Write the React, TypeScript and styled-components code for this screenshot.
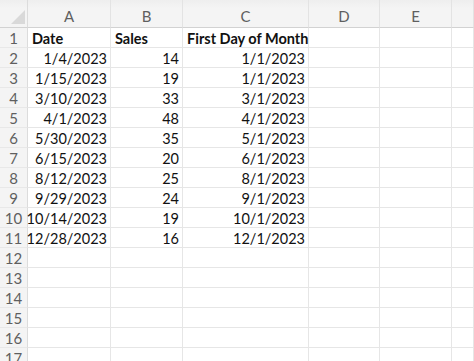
import React from "react";
import styled, { createGlobalStyle } from "styled-components";

const GlobalStyle = createGlobalStyle`
  html, body {
    margin: 0;
    padding: 0;
    background: #ffffff;
  }
  body {
    font-family: Lato, "Open Sans", "Liberation Sans", sans-serif;
    overflow: hidden;
  }
`;

const columns = ["A", "B", "C", "D", "E", ""];
const colWidths = "28px 83px 72px 126px 71px 72px 1fr";

type Row = [string, string, string];
const data: Row[] = [
  ["Date", "Sales", "First Day of Month"],
  ["1/4/2023", "14", "1/1/2023"],
  ["1/15/2023", "19", "1/1/2023"],
  ["3/10/2023", "33", "3/1/2023"],
  ["4/1/2023", "48", "4/1/2023"],
  ["5/30/2023", "35", "5/1/2023"],
  ["6/15/2023", "20", "6/1/2023"],
  ["8/12/2023", "25", "8/1/2023"],
  ["9/29/2023", "24", "9/1/2023"],
  ["10/14/2023", "19", "10/1/2023"],
  ["12/28/2023", "16", "12/1/2023"],
];
const totalRows = 17;

const Sheet = styled.div`
  display: grid;
  grid-template-columns: ${colWidths};
  grid-template-rows: 28px;
  grid-auto-rows: 20px;
  width: 474px;
  height: 361px;
  overflow: hidden;
`;

const Corner = styled.div`
  position: relative;
  background: linear-gradient(#eeeeee, #f4f4f4 30%);
  border-bottom: 1px solid #d2d2d2;
  border-right: 1px solid #dcdcdc;
  svg {
    position: absolute;
    left: 11px;
    bottom: 3px;
  }
`;

const ColHead = styled.div`
  display: flex;
  align-items: flex-end;
  justify-content: center;
  padding-bottom: 1px;
  background: linear-gradient(#eeeeee, #f4f4f4 30%);
  border-bottom: 1px solid #d2d2d2;
  border-right: 1px solid #e3e3e3;
  color: #5f5f5f;
  font-size: 15px;
  line-height: 19px;
`;

const RowHead = styled.div`
  display: flex;
  align-items: center;
  justify-content: center;
  padding-top: 1px;
  background: #f4f4f4;
  border-right: 1px solid #dcdcdc;
  border-bottom: 1px solid #e8e8e8;
  color: #5f5f5f;
  font-size: 15px;
`;

const Cell = styled.div<{ $bold?: boolean; $right?: boolean }>`
  display: flex;
  align-items: center;
  justify-content: ${(p) => (p.$right ? "flex-end" : "flex-start")};
  padding: 1px 3px 0 4px;
  border-right: 1px solid #e6e6e6;
  border-bottom: 1px solid #e6e6e6;
  color: #111111;
  font-size: 14.5px;
  font-weight: ${(p) => (p.$bold ? 700 : 400)};
  white-space: nowrap;
  overflow: visible;
`;

export default function App() {
  const rows = Array.from({ length: totalRows }, (_, i) => data[i]);
  return (
    <>
      <GlobalStyle />
      <Sheet>
        <Corner>
          <svg width="14" height="14" viewBox="0 0 14 14">
            <polygon points="14,0 14,14 0,14" fill="#d9d9d9" />
          </svg>
        </Corner>
        {columns.map((c, i) => (
          <ColHead key={i}>{c}</ColHead>
        ))}
        {rows.map((row, r) => (
          <React.Fragment key={r}>
            <RowHead>{r + 1}</RowHead>
            {columns.map((_, c) => {
              const value = row && c < 3 ? row[c] : "";
              const header = r === 0;
              return (
                <Cell key={c} $bold={header} $right={!header}>
                  {value}
                </Cell>
              );
            })}
          </React.Fragment>
        ))}
      </Sheet>
    </>
  );
}
